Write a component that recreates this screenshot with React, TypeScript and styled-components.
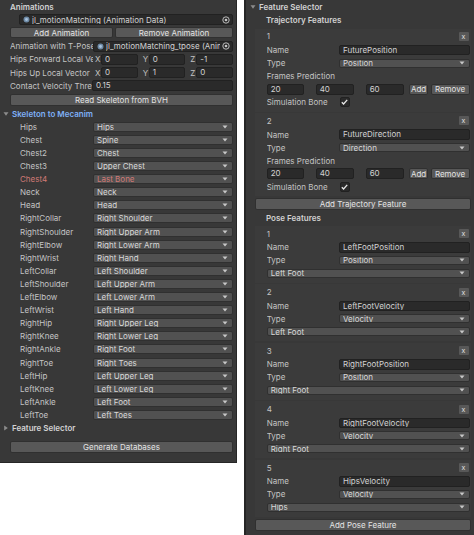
import styled, { createGlobalStyle } from 'styled-components'

const GlobalStyle = createGlobalStyle`
  * { box-sizing: border-box; }
  html, body { margin: 0; padding: 0; background: #ffffff; }
  body {
    font-family: Inter, "Noto Sans", sans-serif;
    font-size: 8px;
    color: #c4c4c4;
  }
`

const Page = styled.div`
  display: flex;
  align-items: flex-start;
  gap: 7px;
  width: 474px;
  height: 535px;
  overflow: hidden;
`

const LeftPanel = styled.div`
  width: 237px;
  height: 463px;
  background: #383838;
  border-right: 1px solid #262626;
  border-bottom: 1px solid #262626;
  padding: 1px 3px 0 3px;
  display: flex;
  flex-direction: column;
`

const RightPanel = styled.div`
  width: 230px;
  height: 535px;
  background: #383838;
  border-left: 2px solid #262626;
  padding: 0.5px 3px 0 4px;
  display: flex;
  flex-direction: column;
`

const Heading = styled.div<{ $indent?: number }>`
  height: 13px;
  line-height: 13px;
  padding-left: ${({ $indent }) => $indent ?? 0}px;
  font-weight: 600;
  color: #d2d2d2;
  white-space: nowrap;
`

const FoldRow = styled.div<{ $blue?: boolean; $mt?: number }>`
  display: flex;
  align-items: center;
  gap: 3px;
  height: 13px;
  margin-top: ${({ $mt }) => $mt ?? 0}px;
  font-weight: 600;
  color: ${({ $blue }) => ($blue ? '#7fb0f7' : '#d2d2d2')};
  white-space: nowrap;
`

const Stack = styled.div<{ $gap: number; $ml?: number; $mt?: number }>`
  display: flex;
  flex-direction: column;
  gap: ${({ $gap }) => $gap}px;
  margin-left: ${({ $ml }) => $ml ?? 0}px;
  margin-top: ${({ $mt }) => $mt ?? 0}px;
`

const Row = styled.div<{ $h?: number; $gap?: number }>`
  display: flex;
  align-items: center;
  height: ${({ $h }) => $h ?? 11}px;
  gap: ${({ $gap }) => $gap ?? 0}px;
  flex-shrink: 0;
`

const Label = styled.div<{ $w?: number; $pl?: number; $red?: boolean }>`
  width: ${({ $w }) => ($w ? `${$w}px` : 'auto')};
  flex: ${({ $w }) => ($w ? 'none' : '1')};
  padding-left: ${({ $pl }) => $pl ?? 0}px;
  color: ${({ $red }) => ($red ? '#d27a76' : '#c4c4c4')};
  white-space: nowrap;
  overflow: hidden;
`

const TextField = styled.div<{ $w?: number; $h?: number }>`
  ${({ $w }) => ($w ? `width: ${$w}px; flex: none;` : 'flex: 1;')}
  height: ${({ $h }) => $h ?? 11}px;
  line-height: ${({ $h }) => ($h ?? 11) - 2}px;
  background: #2a2a2a;
  border: 1px solid #212121;
  border-radius: 2px;
  padding-left: 3px;
  color: #d2d2d2;
  white-space: nowrap;
  overflow: hidden;
`

const ObjectBox = styled.div<{ $ml?: number }>`
  flex: 1;
  display: flex;
  align-items: center;
  gap: 2px;
  height: 11px;
  margin-left: ${({ $ml }) => $ml ?? 0}px;
  background: #2a2a2a;
  border: 1px solid #212121;
  border-radius: 2px;
  padding: 0 2px 0 3px;
  color: #d2d2d2;
  white-space: nowrap;
  overflow: hidden;
`

const ObjectText = styled.span`
  flex: 1;
  overflow: hidden;
`

const DropBox = styled.div<{ $h?: number; $red?: boolean }>`
  flex: 1;
  display: flex;
  align-items: center;
  height: ${({ $h }) => $h ?? 10}px;
  background: #515151;
  border: 1px solid #303030;
  border-radius: 2px;
  padding: 0 4px 0 3px;
  color: ${({ $red }) => ($red ? '#d27a76' : '#d8d8d8')};
  white-space: nowrap;
  overflow: hidden;
`

const DropText = styled.span`
  flex: 1;
  overflow: hidden;
`

const Button = styled.div<{ $w?: number; $h?: number; $mt?: number }>`
  ${({ $w }) => ($w ? `width: ${$w}px; flex: none;` : 'flex: 1;')}
  height: ${({ $h }) => $h ?? 11}px;
  margin-top: ${({ $mt }) => $mt ?? 0}px;
  display: flex;
  align-items: center;
  justify-content: center;
  background: #585858;
  border: 1px solid #303030;
  border-radius: 2px;
  color: #e4e4e4;
  white-space: nowrap;
  flex-shrink: 0;
`

const VectorGroup = styled.div`
  flex: 1;
  display: flex;
  align-items: center;
  height: 11px;
`

const AxisLabel = styled.span`
  width: 8px;
  padding-left: 2px;
  flex: none;
`

const Element = styled.div`
  display: flex;
  flex-direction: column;
  background: #3b3b3b;
  padding: 0.5px 1.5px 3px 11.7px;
`

const ElementHead = styled.div`
  display: flex;
  align-items: center;
  justify-content: space-between;
  height: 14.5px;
  padding-right: 1px;
`

const ElRow = styled.div`
  display: flex;
  align-items: center;
  height: 13px;
`

const CloseBtn = styled.div`
  width: 10px;
  height: 9px;
  display: flex;
  align-items: center;
  justify-content: center;
  background: #585858;
  border-radius: 1px;
  font-size: 7px;
  color: #e0e0e0;
`

const Check = styled.div`
  width: 10px;
  height: 10px;
  margin-left: 1px;
  display: flex;
  align-items: center;
  justify-content: center;
  background: #2a2a2a;
  border: 1px solid #212121;
  border-radius: 2px;
`

const Sub = styled.div<{ $mt?: number }>`
  margin-left: 5px;
  margin-top: ${({ $mt }) => $mt ?? 0}px;
  display: flex;
  flex-direction: column;
`

const Caret = () => (
  <svg width="6" height="4" viewBox="0 0 6 4">
    <path d="M0.5 0.5 L5.5 0.5 L3 3.5 Z" fill="#c8c8c8" />
  </svg>
)

const Arrow = ({ open }: { open: boolean }) => (
  <svg width="6" height="6" viewBox="0 0 6 6">
    {open ? (
      <path d="M0.5 1.2 L5.5 1.2 L3 4.8 Z" fill="#8c8c8c" />
    ) : (
      <path d="M1.2 0.5 L4.8 3 L1.2 5.5 Z" fill="#8c8c8c" />
    )}
  </svg>
)

const AssetIcon = () => (
  <svg width="7" height="7" viewBox="0 0 8 8">
    <circle cx="4" cy="4" r="3.4" fill="#6e8aa6" />
    <circle cx="4" cy="4" r="1.6" fill="#a9c2dc" />
  </svg>
)

const PickIcon = () => (
  <svg width="8" height="8" viewBox="0 0 8 8">
    <circle cx="4" cy="4" r="3.2" fill="none" stroke="#c8c8c8" strokeWidth="0.9" />
    <circle cx="4" cy="4" r="1.3" fill="#c8c8c8" />
  </svg>
)

const CheckMark = () => (
  <svg width="7" height="6" viewBox="0 0 7 6">
    <path d="M0.8 3.2 L2.6 5 L6.2 0.8" fill="none" stroke="#e8e8e8" strokeWidth="1.3" />
  </svg>
)

const bones: [string, string, boolean?][] = [
  ['Hips', 'Hips'],
  ['Chest', 'Spine'],
  ['Chest2', 'Chest'],
  ['Chest3', 'Upper Chest'],
  ['Chest4', 'Last Bone', true],
  ['Neck', 'Neck'],
  ['Head', 'Head'],
  ['RightCollar', 'Right Shoulder'],
  ['RightShoulder', 'Right Upper Arm'],
  ['RightElbow', 'Right Lower Arm'],
  ['RightWrist', 'Right Hand'],
  ['LeftCollar', 'Left Shoulder'],
  ['LeftShoulder', 'Left Upper Arm'],
  ['LeftElbow', 'Left Lower Arm'],
  ['LeftWrist', 'Left Hand'],
  ['RightHip', 'Right Upper Leg'],
  ['RightKnee', 'Right Lower Leg'],
  ['RightAnkle', 'Right Foot'],
  ['RightToe', 'Right Toes'],
  ['LeftHip', 'Left Upper Leg'],
  ['LeftKnee', 'Left Lower Leg'],
  ['LeftAnkle', 'Left Foot'],
  ['LeftToe', 'Left Toes'],
]

const trajectory = [
  { name: 'FuturePosition', type: 'Position' },
  { name: 'FutureDirection', type: 'Direction' },
]

const pose = [
  { name: 'LeftFootPosition', type: 'Position', bone: 'Left Foot' },
  { name: 'LeftFootVelocity', type: 'Velocity', bone: 'Left Foot' },
  { name: 'RightFootPosition', type: 'Position', bone: 'Right Foot' },
  { name: 'RightFootVelocity', type: 'Velocity', bone: 'Right Foot' },
  { name: 'HipsVelocity', type: 'Velocity', bone: 'Hips' },
]

function Vector({ x, y, z }: { x: string; y: string; z: string }) {
  return (
    <Row $gap={3} style={{ flex: 1 }}>
      {[['X', x], ['Y', y], ['Z', z]].map(([a, v]) => (
        <VectorGroup key={a}>
          <AxisLabel>{a}</AxisLabel>
          <TextField>{v}</TextField>
        </VectorGroup>
      ))}
    </Row>
  )
}

function Dropdown({ value, h, red }: { value: string; h?: number; red?: boolean }) {
  return (
    <DropBox $h={h} $red={red}>
      <DropText>{value}</DropText>
      <Caret />
    </DropBox>
  )
}

function App() {
  return (
    <>
      <GlobalStyle />
      <Page>
        <LeftPanel>
          <Heading $indent={7}>Animations</Heading>
          <Stack $gap={2.3} $ml={7}>
            <Row>
              <ObjectBox $ml={9}>
                <AssetIcon />
                <ObjectText>jl_motionMatching (Animation Data)</ObjectText>
                <PickIcon />
              </ObjectBox>
            </Row>
            <Row $gap={2}>
              <Button $w={103}>Add Animation</Button>
              <Button>Remove Animation</Button>
            </Row>
            <Row>
              <Label $w={83}>Animation with T-Pose</Label>
              <ObjectBox>
                <AssetIcon />
                <ObjectText>jl_motionMatching_tpose (Animation Data)</ObjectText>
                <PickIcon />
              </ObjectBox>
            </Row>
            <Row>
              <Label $w={83}>Hips Forward Local Vector</Label>
              <Vector x="0" y="0" z="-1" />
            </Row>
            <Row>
              <Label $w={83}>Hips Up Local Vector</Label>
              <Vector x="0" y="1" z="0" />
            </Row>
            <Row>
              <Label $w={82}>Contact Velocity Threshold</Label>
              <TextField>0.15</TextField>
            </Row>
            <Button>Read Skeleton from BVH</Button>
          </Stack>
          <FoldRow $blue $mt={1.5}>
            <Arrow open />
            Skeleton to Mecanim
          </FoldRow>
          <Stack $gap={0} $ml={7}>
            {bones.map(([bone, target, red]) => (
              <Row key={bone} $h={13.1}>
                <Label $w={83} $pl={10} $red={red}>
                  {bone}
                </Label>
                <Dropdown value={target} red={red} />
              </Row>
            ))}
          </Stack>
          <FoldRow>
            <Arrow open={false} />
            Feature Selector
          </FoldRow>
          <Stack $gap={0} $ml={7}>
            <Button $h={17} $mt={6.4}>
              Generate Databases
            </Button>
          </Stack>
        </LeftPanel>

        <RightPanel>
          <FoldRow>
            <Arrow open />
            Feature Selector
          </FoldRow>
          <Sub>
            <Heading $indent={11}>Trajectory Features</Heading>
            <Stack $gap={1.5} $mt={2}>
              {trajectory.map((t, i) => (
                <Element key={t.name}>
                  <ElementHead>
                    {i + 1}
                    <CloseBtn>x</CloseBtn>
                  </ElementHead>
                  <ElRow>
                    <Label $w={72.3}>Name</Label>
                    <TextField $h={10.5}>{t.name}</TextField>
                  </ElRow>
                  <ElRow>
                    <Label $w={72.3}>Type</Label>
                    <Dropdown value={t.type} h={9} />
                  </ElRow>
                  <ElRow>
                    <Label>Frames Prediction</Label>
                  </ElRow>
                  <ElRow>
                    <TextField $w={37.3}>20</TextField>
                    <TextField $w={38.3} style={{ marginLeft: 11.7 }}>
                      40
                    </TextField>
                    <TextField $w={38.3} style={{ marginLeft: 11.7 }}>
                      60
                    </TextField>
                    <Button $w={19.3} style={{ marginLeft: 5 }}>
                      Add
                    </Button>
                    <Button style={{ marginLeft: 2.4 }}>Remove</Button>
                  </ElRow>
                  <ElRow>
                    <Label $w={72.3}>Simulation Bone</Label>
                    <Check>
                      <CheckMark />
                    </Check>
                  </ElRow>
                </Element>
              ))}
            </Stack>
            <Button $h={10.5} $mt={2}>
              Add Trajectory Feature
            </Button>
            <Heading $indent={11} style={{ marginTop: 2 }}>
              Pose Features
            </Heading>
            <Stack $gap={1.5} $mt={0.75}>
              {pose.map((p, i) => (
                <Element key={p.name}>
                  <ElementHead>
                    {i + 1}
                    <CloseBtn>x</CloseBtn>
                  </ElementHead>
                  <ElRow>
                    <Label $w={72.3}>Name</Label>
                    <TextField $h={10.5}>{p.name}</TextField>
                  </ElRow>
                  <ElRow>
                    <Label $w={72.3}>Type</Label>
                    <Dropdown value={p.type} h={9} />
                  </ElRow>
                  <ElRow>
                    <Dropdown value={p.bone} h={9} />
                  </ElRow>
                </Element>
              ))}
            </Stack>
            <Button $h={11} $mt={2.5}>
              Add Pose Feature
            </Button>
          </Sub>
        </RightPanel>
      </Page>
    </>
  )
}

export default App
